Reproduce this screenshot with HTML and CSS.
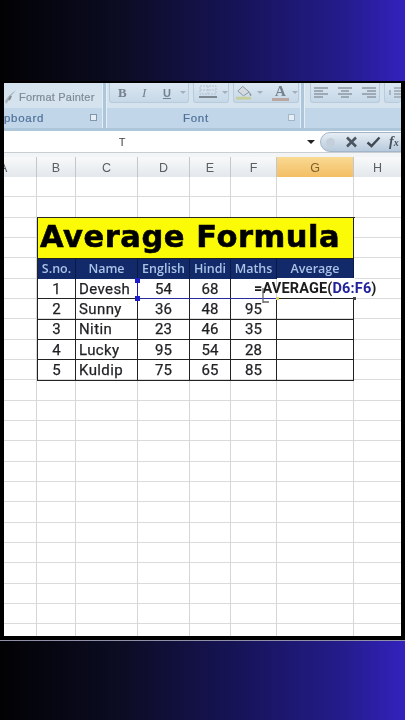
FILE: index.html
```html
<!DOCTYPE html>
<html lang="en">

<head>
    <meta charset="UTF-8">
    <meta name="viewport" content="width=device-width, initial-scale=1.0">
    <title>Average Formula</title>
    <link rel="stylesheet" href="styles.css">
</head>

<body>
    <div class="band band-top"></div>

    <div class="screen">
        <div class="ribbon">
            <div class="group group-clipboard">
                <div class="group-body painter">
                    <svg class="brush" width="14" height="16" viewBox="0 0 14 16"><path d="M12 1 7 7 5 11 2 15 1 12 4 8 8 4Z" fill="#a9b2ba"/><path d="M7 7 5 11" stroke="#7f8a94" stroke-width="2"/></svg>
                    <span>Format Painter</span>
                </div>
                <div class="group-label">
                    <span class="label-cut">pboard</span>
                    <i class="launcher"></i>
                </div>
            </div>
            <div class="group group-font">
                <div class="group-body tools">
                    <div class="tool-box box-biu">
                        <b class="tool-b">B</b>
                        <i class="tool-i">I</i>
                        <u class="tool-u">U</u>
                        <i class="caret"></i>
                    </div>
                    <div class="tool-box box-border">
                        <svg width="20" height="15" viewBox="0 0 20 15"><path d="M2 1h16v8H2zM10 1v8M2 5h16" fill="none" stroke="#b5c0ca" stroke-dasharray="2 1"/><path d="M1 12h18" stroke="#7b8791" stroke-width="2"/></svg>
                        <i class="caret"></i>
                    </div>
                    <div class="tool-box box-color">
                        <svg width="20" height="15" viewBox="0 0 20 15"><path d="M8 1 15 7 9 11 3 6Z" fill="#d3dae0" stroke="#87929c"/><path d="M15 7c2 2 3 3 2 4s-2-1-2-4Z" fill="#8b96a0"/><path d="M1 12h16v3H1z" fill="#c6cf9b"/></svg>
                        <i class="caret"></i>
                        <span class="tool-a">A</span>
                        <i class="caret"></i>
                    </div>
                </div>
                <div class="group-label">
                    <span class="label-mid">Font</span>
                    <i class="launcher launcher-pale"></i>
                </div>
            </div>
            <div class="group group-align">
                <div class="group-body tools">
                    <div class="tool-box box-align">
                        <svg width="16" height="14" viewBox="0 0 16 14"><path d="M1 2h14M1 5h9M1 8h14M1 11h9" stroke="#8d98a3" stroke-width="1.4"/></svg>
                        <svg width="16" height="14" viewBox="0 0 16 14"><path d="M1 2h14M4 5h8M1 8h14M4 11h8" stroke="#8d98a3" stroke-width="1.4"/></svg>
                        <svg width="16" height="14" viewBox="0 0 16 14"><path d="M1 2h14M6 5h9M1 8h14M6 11h9" stroke="#8d98a3" stroke-width="1.4"/></svg>
                    </div>
                    <div class="tool-box box-indent">
                        <svg width="12" height="14" viewBox="0 0 12 14"><path d="M5 2h7M5 5h7M5 8h7M5 11h7M1 4v5" stroke="#9aa5af" stroke-width="1.4"/></svg>
                    </div>
                </div>
                <div class="group-label"></div>
            </div>
        </div>

        <div class="formula-bar">
            <span class="name-box">T</span>
            <i class="name-arrow"></i>
            <div class="fx-pill">
                <i class="fx-knob"></i>
                <svg width="13" height="12" viewBox="0 0 13 12"><path d="M2 1.500 11 10.500M11 1.500 2 10.500" stroke="#4c5660" stroke-width="2.600"/></svg>
                <svg width="15" height="12" viewBox="0 0 15 12"><path d="M1.500 6.500 5.500 10 13.500 1.500" fill="none" stroke="#3f4a55" stroke-width="2.400"/></svg>
                <span class="fx">f<small>x</small></span>
            </div>
        </div>

        <div class="col-heads">
            <div class="col-head col-a">A</div>
            <div class="col-head col-b">B</div>
            <div class="col-head col-c">C</div>
            <div class="col-head col-d">D</div>
            <div class="col-head col-e">E</div>
            <div class="col-head col-f">F</div>
            <div class="col-head col-g active">G</div>
            <div class="col-head col-h">H</div>
        </div>

        <div class="sheet">
            <div class="marks">
                <div class="title">Average Formula</div>

                <div class="th">S.no.</div>
                <div class="th">Name</div>
                <div class="th">English</div>
                <div class="th">Hindi</div>
                <div class="th">Maths</div>
                <div class="th">Average</div>

                <div class="td">1</div>
                <div class="td name">Devesh</div>
                <div class="td">54</div>
                <div class="td">68</div>
                <div class="td no-right"></div>
                <div class="td no-right"></div>

                <div class="td">2</div>
                <div class="td name">Sunny</div>
                <div class="td">36</div>
                <div class="td">48</div>
                <div class="td">95</div>
                <div class="td"></div>

                <div class="td">3</div>
                <div class="td name">Nitin</div>
                <div class="td">23</div>
                <div class="td">46</div>
                <div class="td">35</div>
                <div class="td"></div>

                <div class="td">4</div>
                <div class="td name">Lucky</div>
                <div class="td">95</div>
                <div class="td">54</div>
                <div class="td">28</div>
                <div class="td"></div>

                <div class="td">5</div>
                <div class="td name">Kuldip</div>
                <div class="td">75</div>
                <div class="td">65</div>
                <div class="td">85</div>
                <div class="td"></div>

                <!-- range picked while typing the formula -->
                <div class="range">
                    <i class="handle handle-top"></i>
                    <i class="handle handle-bottom"></i>
                </div>
                <div class="editing">
                    <i class="corner corner-left"></i>
                    <i class="corner corner-right"></i>
                </div>
                <div class="formula">=AVERAGE(<span class="ref">D6:F6</span>)</div>
                <svg class="cursor" width="10" height="16" viewBox="0 0 10 16"><path d="M3 0v15M3 14h6" fill="none" stroke="#666" stroke-width="1.300"/></svg>
            </div>
        </div>
    </div>

    <div class="band band-bottom"></div>
</body>

</html>
```

FILE: styles.css
```css
* {
    box-sizing: border-box;
}

body {
    margin: 0;
    width: 405px;
    height: 720px;
    overflow: hidden;
    background-color: #000;
    font-family: "Liberation Sans", Arial, sans-serif;
    display: flex;
    flex-direction: column;
}

.band {
    background: linear-gradient(90deg, #020204 0%, #0c0c24 30%, #17145a 60%, #241c8c 85%, #3322bd 100%);
}

.band-top {
    height: 81px;
    margin-bottom: 2px;
}

.band-bottom {
    height: 80px;
    margin-top: 4px;
    border-top: 1px solid #8f8fa8;
}

.screen {
    width: 397px;
    height: 553px;
    margin: 0 4px;
    background-color: #fff;
    display: flex;
    flex-direction: column;
    overflow: hidden;
    filter: blur(0.35px);
}

/* ribbon */
.ribbon {
    height: 48px;
    display: flex;
    gap: 3px;
    padding: 0 0 3px;
    background-color: #aec6da;
    flex-shrink: 0;
}

.group {
    display: flex;
    flex-direction: column;
    background-color: #d5e3ef;
    border-right: 1px solid #e4eef6;
}

.group-clipboard {
    width: 100px;
}

.group-font {
    width: 197px;
    border-left: 1px solid #e4eef6;
}

.group-align {
    flex: 1;
    border-right: 0;
    border-left: 1px solid #e4eef6;
}

.group-body {
    height: 25px;
    display: flex;
}

.group-label {
    flex: 1;
    position: relative;
    background-color: #c1d6e8;
    font-size: 11.500px;
    color: #4f7099;
    letter-spacing: 0.700px;
    -webkit-text-stroke: 0.200px #4f7099;
    display: flex;
    align-items: center;
}

.painter {
    align-items: center;
    gap: 1px;
    padding: 2px 0 0 0;
    font-size: 11px;
    letter-spacing: 0.200px;
    color: #7f8b97;
    -webkit-text-stroke: 0.200px #7f8b97;
    white-space: nowrap;
}

.tools {
    gap: 4px;
    padding: 0 0 0 2px;
}

.group-align .tools {
    padding-left: 5px;
}

.tool-box {
    height: 20px;
    display: flex;
    align-items: center;
    background: linear-gradient(#dbe7f2, #c6d8e8);
    border: 1px solid #b9cbdb;
    border-top: 0;
    border-radius: 0 0 3px 3px;
}

.box-biu {
    width: 80px;
    padding-left: 8px;
}

.box-border {
    width: 36px;
    gap: 1px;
    padding-left: 4px;
}

.box-color {
    width: 66px;
    padding-left: 1px;
}

.box-align {
    width: 70px;
    gap: 8px;
    padding-left: 2px;
}

.box-indent {
    flex: 1;
    padding-left: 4px;
    border-right: 0;
}

.tool-b,
.tool-i,
.tool-u,
.tool-a {
    font-family: "Liberation Serif", serif;
    font-size: 13px;
    color: #75818c;
}

.tool-b {
    width: 24px;
}

.tool-i {
    width: 21px;
}

.tool-u {
    width: 14px;
    font-family: "Liberation Sans", sans-serif;
    font-weight: bold;
    font-size: 11px;
}

.tool-a {
    width: 18px;
    margin-left: 9px;
    font-size: 15px;
    font-weight: bold;
    border-bottom: 3px solid #b9a6a0;
    line-height: 13px;
    text-align: center;
}

.caret {
    width: 0;
    height: 0;
    margin-left: 3px;
    border: 3px solid transparent;
    border-top-color: #a4afba;
    border-bottom: 0;
}

.label-mid {
    position: absolute;
    left: 76px;
}

.launcher {
    position: absolute;
    right: 5px;
    top: 6px;
    width: 7px;
    height: 7px;
    border: 1px solid #7f96ab;
    background-color: #e6eef5;
}

.launcher-pale {
    border-color: #a4b7c9;
}

/* formula bar */
.formula-bar {
    height: 21px;
    position: relative;
    display: flex;
    align-items: center;
    background-color: #fff;
    flex-shrink: 0;
}

.name-box {
    width: 236px;
    text-align: center;
    font-size: 11px;
    color: #444;
}

.name-arrow {
    position: absolute;
    left: 303px;
    top: 9px;
    width: 0;
    height: 0;
    border: 4px solid transparent;
    border-top-color: #222;
    border-bottom: 0;
}

.fx-pill {
    position: absolute;
    left: 316px;
    top: 1px;
    width: 90px;
    height: 20px;
    display: flex;
    align-items: center;
    padding-left: 24px;
    gap: 8px;
    background: linear-gradient(#e6edf4, #b7cadc);
    border: 1px solid #a2b6c9;
    border-radius: 10px 0 0 10px;
}

.fx-knob {
    position: absolute;
    left: 5px;
    top: 5px;
    width: 9px;
    height: 9px;
    border-radius: 50%;
    background-color: #c3cfda;
}

.fx {
    font-family: "Liberation Serif", serif;
    font-style: italic;
    font-weight: bold;
    font-size: 14px;
    color: #44505c;
}

.fx small {
    font-size: 10px;
}

/* column letters */
.col-heads {
    height: 25px;
    display: flex;
    flex-shrink: 0;
    padding-top: 4px;
    background-color: #f2f4f6;
    border-top: 1px solid #c9ced3;
}

.col-head {
    height: 21px;
    display: flex;
    align-items: center;
    justify-content: center;
    flex-shrink: 0;
    font-size: 12.500px;
    color: #5a5f64;
    background: linear-gradient(#f8f9fa, #e2e7eb);
    border-right: 1px solid #c3c7cb;
    overflow: hidden;
}

.col-a {
    width: 33px;
    justify-content: flex-start;
    text-indent: -5px;
}

.col-b {
    width: 39px;
}

.col-c {
    width: 62px;
}

.col-d {
    width: 52px;
}

.col-e {
    width: 41px;
}

.col-f {
    width: 46px;
}

.col-g {
    width: 77px;
}

.col-h {
    flex: 1;
    border-right: 0;
}

.col-head.active {
    color: #7d6230;
    background: linear-gradient(#f9d992, #f3bd62);
}

/* worksheet */
.sheet {
    flex: 1;
    padding: 40px 0 0 33px;
    background-color: #fff;
    background-image:
        linear-gradient(#d4d6d8, #d4d6d8),
        linear-gradient(#d4d6d8, #d4d6d8),
        linear-gradient(#d4d6d8, #d4d6d8),
        linear-gradient(#d4d6d8, #d4d6d8),
        linear-gradient(#d4d6d8, #d4d6d8),
        linear-gradient(#d4d6d8, #d4d6d8),
        linear-gradient(#d4d6d8, #d4d6d8),
        repeating-linear-gradient(#fff 0, #fff 19.330px, #d9dbdd 19.330px, #d9dbdd 20.330px);
    background-repeat: no-repeat;
    background-size:
        1px 100%, 1px 100%, 1px 100%, 1px 100%, 1px 100%, 1px 100%, 1px 100%,
        100% 100%;
    background-position:
        32px 0, 71px 0, 133px 0, 185px 0, 226px 0, 272px 0, 349px 0,
        0 0;
}

.marks {
    position: relative;
    width: 318px;
    display: grid;
    grid-template-columns: 38px 62px 52px 41px 46px 77px;
    grid-auto-rows: 20.330px;
    border-top: 1px solid #2b2b22;
    border-left: 1px solid #222;
}

.title {
    grid-column: 1 / -1;
    grid-row: span 2;
    padding-left: 2px;
    background-color: #fbfb08;
    border-right: 1px solid #222;
    border-bottom: 1px solid #222;
    color: #000;
    font-family: "DejaVu Sans", sans-serif;
    font-size: 30.500px;
    font-weight: bold;
    letter-spacing: 0.550px;
    line-height: 38px;
    -webkit-text-stroke: 0.600px #000;
    white-space: nowrap;
}

.th {
    display: flex;
    align-items: center;
    justify-content: center;
    background-color: #12296a;
    border-right: 1px solid #0b1a44;
    color: #a9c3e6;
    font-family: "Open Sans", sans-serif;
    font-size: 12.500px;
    font-weight: 600;
    white-space: nowrap;
}

.td {
    display: flex;
    align-items: center;
    justify-content: center;
    border-right: 1px solid #222;
    border-bottom: 1px solid #222;
    color: #1f2123;
    font-family: "Roboto", sans-serif;
    font-size: 15px;
    font-weight: 400;
    -webkit-text-stroke: 0.250px #1f2123;
}

.td.name {
    justify-content: flex-start;
    padding-left: 3px;
    letter-spacing: 0.400px;
}

.td.no-right {
    border-right: 0;
}

.range {
    position: absolute;
    left: 99px;
    top: 61px;
    width: 140px;
    height: 20px;
    border-left: 1px solid #1d1db4;
    border-bottom: 1.500px solid #2a2aa0;
}

.handle {
    position: absolute;
    left: -3px;
    width: 5px;
    height: 5px;
    background-color: #1c1cc8;
}

.handle-top {
    top: -1px;
}

.handle-bottom {
    bottom: -3px;
}

.editing {
    position: absolute;
    left: 239px;
    top: 60px;
    width: 78px;
    height: 20px;
    background-color: #fff;
}

.corner {
    position: absolute;
    bottom: -2px;
    width: 3px;
    height: 3px;
    background-color: #444;
}

.corner-left {
    left: -1px;
    background-color: #d8d860;
}

.corner-right {
    right: -1px;
}

.formula {
    position: absolute;
    left: 216px;
    top: 62px;
    height: 20px;
    line-height: 18px;
    font-family: "Roboto", sans-serif;
    font-size: 14.500px;
    font-weight: 700;
    letter-spacing: 0.150px;
    color: #1c1c1c;
    white-space: nowrap;
}

.ref {
    color: #22229c;
}

.cursor {
    position: absolute;
    left: 222px;
    top: 70px;
}
```
